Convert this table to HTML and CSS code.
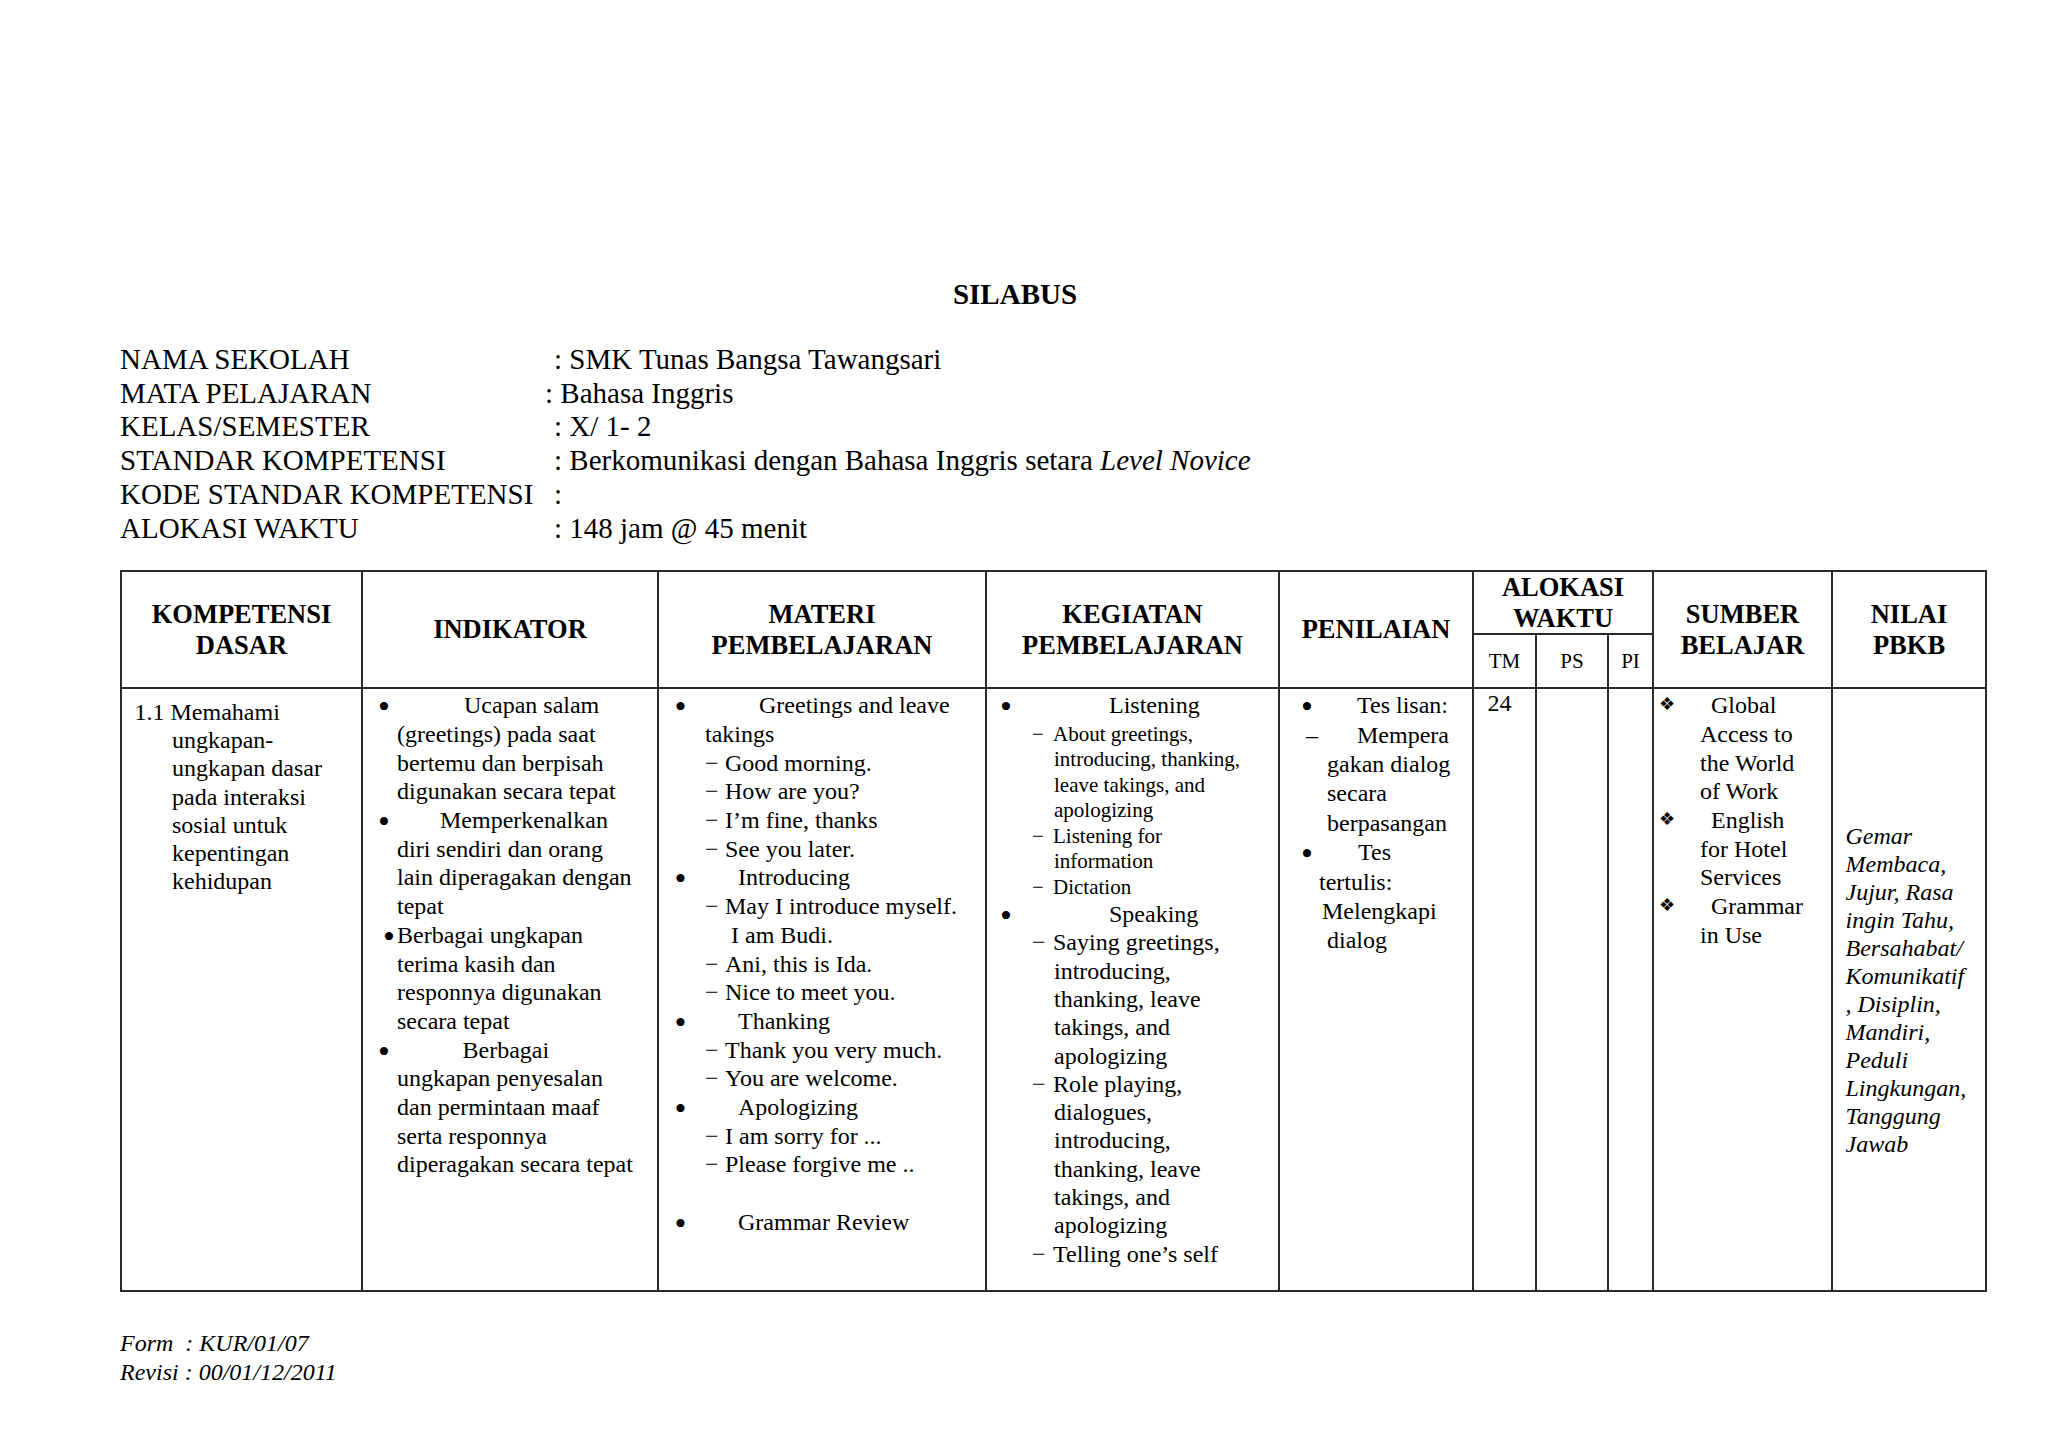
FILE: index.html
```html
<!DOCTYPE html>
<html lang="id">
<head>
<meta charset="utf-8">
<title>Silabus</title>
<link rel="stylesheet" href="styles.css">
</head>
<body>
<div class="page">
  <h1 class="title">SILABUS</h1>

  <div class="meta">
    <div class="label">NAMA SEKOLAH</div><div class="value">: SMK Tunas Bangsa Tawangsari</div>
    <div class="label">MATA PELAJARAN</div><div class="value shift">: Bahasa Inggris</div>
    <div class="label">KELAS/SEMESTER</div><div class="value">: X/ 1- 2</div>
    <div class="label">STANDAR KOMPETENSI</div><div class="value">: Berkomunikasi dengan Bahasa Inggris setara <i>Level Novice</i></div>
    <div class="label">KODE STANDAR KOMPETENSI</div><div class="value">:</div>
    <div class="label">ALOKASI WAKTU</div><div class="value">: 148 jam @ 45 menit</div>
  </div>

  <table class="syl">
    <colgroup>
      <col class="c1"><col class="c2"><col class="c3"><col class="c4"><col class="c5">
      <col class="c6"><col class="c7"><col class="c8"><col class="c9"><col class="c10">
    </colgroup>
    <thead>
      <tr class="h1">
        <th rowspan="2">KOMPETENSI<br>DASAR</th>
        <th rowspan="2">INDIKATOR</th>
        <th rowspan="2">MATERI<br>PEMBELAJARAN</th>
        <th rowspan="2">KEGIATAN<br>PEMBELAJARAN</th>
        <th rowspan="2">PENILAIAN</th>
        <th colspan="3">ALOKASI<br>WAKTU</th>
        <th rowspan="2">SUMBER<br>BELAJAR</th>
        <th rowspan="2">NILAI<br>PBKB</th>
      </tr>
      <tr class="h2">
        <th class="sm">TM</th>
        <th class="sm">PS</th>
        <th class="sm">PI</th>
      </tr>
    </thead>
    <tbody>
      <tr class="body">
        <td class="kd"><p>1.1 Memahami<br>ungkapan-<br>ungkapan dasar<br>pada interaksi<br>sosial untuk<br>kepentingan<br>kehidupan</p></td>

        <td class="ind">
          <p><span class="bl dot w84">•</span>Ucapan salam<br>(greetings) pada saat<br>bertemu dan berpisah<br>digunakan secara tepat</p>
          <p><span class="bl dot w60">•</span>Memperkenalkan<br>diri sendiri dan orang<br>lain diperagakan dengan<br>tepat</p>
          <p class="near"><span class="bl dot w12">•</span>Berbagai ungkapan<br>terima kasih dan<br>responnya digunakan<br>secara tepat</p>
          <p><span class="bl dot w82">•</span>Berbagai<br>ungkapan penyesalan<br>dan permintaan maaf<br>serta responnya<br>diperagakan secara tepat</p>
        </td>

        <td class="mat">
          <p class="it"><span class="bl dot w82">•</span>Greetings and leave<br>takings</p>
          <p class="sub"><span class="ds">−</span>Good morning.</p>
          <p class="sub"><span class="ds">−</span>How are you?</p>
          <p class="sub"><span class="ds">−</span>I’m fine, thanks</p>
          <p class="sub"><span class="ds">−</span>See you later.</p>
          <p class="it"><span class="bl dot w61">•</span>Introducing</p>
          <p class="sub"><span class="ds">−</span>May I introduce myself.<br>&nbsp;I am Budi.</p>
          <p class="sub"><span class="ds">−</span>Ani, this is Ida.</p>
          <p class="sub"><span class="ds">−</span>Nice to meet you.</p>
          <p class="it"><span class="bl dot w61">•</span>Thanking</p>
          <p class="sub"><span class="ds">−</span>Thank you very much.</p>
          <p class="sub"><span class="ds">−</span>You are welcome.</p>
          <p class="it"><span class="bl dot w61">•</span>Apologizing</p>
          <p class="sub"><span class="ds">−</span>I am sorry for ...</p>
          <p class="sub"><span class="ds">−</span>Please forgive me ..</p>
          <p class="gap"></p>
          <p class="it"><span class="bl dot w61">•</span>Grammar Review</p>
        </td>

        <td class="keg">
          <p class="it"><span class="bl dot w107">•</span>Listening</p>
          <div class="small">
            <p class="sub"><span class="ds">−</span>About greetings,<br>introducing, thanking,<br>leave takings, and<br>apologizing</p>
            <p class="sub"><span class="ds">−</span>Listening for<br>information</p>
            <p class="sub"><span class="ds">−</span>Dictation</p>
          </div>
          <p class="it"><span class="bl dot w107">•</span>Speaking</p>
          <p class="sub"><span class="ds">−</span>Saying greetings,<br>introducing,<br>thanking, leave<br>takings, and<br>apologizing</p>
          <p class="sub"><span class="ds">−</span>Role playing,<br>dialogues,<br>introducing,<br>thanking, leave<br>takings, and<br>apologizing</p>
          <p class="sub"><span class="ds">−</span>Telling one’s self</p>
        </td>

        <td class="pen">
          <div class="ln l23"><span class="bl dot w54">•</span>Tes lisan:</div>
          <div class="ln l26"><span class="bl w51">–</span>Mempera</div>
          <div class="ln l47">gakan dialog</div>
          <div class="ln l47">secara</div>
          <div class="ln l47">berpasangan</div>
          <div class="ln l23"><span class="bl dot w55">•</span>Tes</div>
          <div class="ln l39">tertulis:</div>
          <div class="ln l42">Melengkapi</div>
          <div class="ln l47">dialog</div>
        </td>

        <td class="tm">24</td>
        <td></td>
        <td></td>

        <td class="src">
          <p><span class="dm">❖</span>Global<br>Access to<br>the World<br>of Work</p>
          <p><span class="dm">❖</span>English<br>for Hotel<br>Services</p>
          <p><span class="dm">❖</span>Grammar<br>in Use</p>
        </td>

        <td class="nil">Gemar<br>Membaca,<br>Jujur, Rasa<br>ingin Tahu,<br>Bersahabat/<br>Komunikatif<br>, Disiplin,<br>Mandiri,<br>Peduli<br>Lingkungan,<br>Tanggung<br>Jawab</td>
      </tr>
    </tbody>
  </table>

  <div class="foot">
    <div>Form &nbsp;: KUR/01/07</div>
    <div>Revisi : 00/01/12/2011</div>
  </div>
</div>
</body>
</html>
```

FILE: styles.css
```css
html, body {
  margin: 0;
  padding: 0;
  background: #ffffff;
}

body {
  font-family: "Liberation Serif", "Times New Roman", serif;
  color: #000000;
}

.page {
  padding: 277px 0 40px 120px;
  width: 1867px;
}

.title {
  margin: 0;
  width: 1790px;
  text-align: center;
  font-size: 29px;
  line-height: 34px;
  font-weight: bold;
}

.meta {
  margin-top: 32px;
  display: grid;
  grid-template-columns: 434px auto;
  font-size: 29px;
  line-height: 33.7px;
}

.meta .label,
.meta .value {
  white-space: nowrap;
}

.meta .shift {
  margin-left: -9px;
}

/* ---------- table ---------- */
.syl {
  margin-top: 25px;
  border-collapse: collapse;
  table-layout: fixed;
  width: 1867px;
}

.syl th,
.syl td {
  border: 2px solid #2a2a2a;
  padding: 0;
}

.c1 { width: 241px; }
.c2 { width: 296px; }
.c3 { width: 328px; }
.c4 { width: 293px; }
.c5 { width: 194px; }
.c6 { width: 63px; }
.c7 { width: 72px; }
.c8 { width: 45px; }
.c9 { width: 179px; }
.c10 { width: 154px; }

.syl th {
  font-size: 26.5px;
  line-height: 30.5px;
  font-weight: bold;
  text-align: center;
  vertical-align: middle;
}

.syl tr.h1 th { height: 60px; }
.syl tr.h2 th { height: 52px; }

.syl th.sm {
  font-size: 21px;
  font-weight: normal;
  line-height: 24px;
}

.syl tr.body td {
  height: 599px;
  vertical-align: top;
  font-size: 24px;
  line-height: 28.7px;
}

.syl p {
  margin: 0;
}

.bl,
.ds,
.dm {
  display: inline-block;
  text-indent: 0;
}

.bl.dot {
  font-size: 34px;
  line-height: 0;
  vertical-align: -5px;
  margin-left: -2px;
  padding-right: 2px;
}

.w12 { width: 12px; }
.w51 { width: 51px; }
.w54 { width: 54px; }
.w55 { width: 55px; }
.w60 { width: 60px; }
.w61 { width: 61.5px; }
.w82 { width: 82.5px; }
.w84 { width: 84px; }
.w107 { width: 107px; }

/* kompetensi dasar */
.kd p {
  padding: 9px 0 0 50px;
  text-indent: -37.5px;
  line-height: 28.1px;
}

/* indikator */
.ind {
  padding-top: 2px !important;
}
.ind p {
  padding-left: 34px;
  text-indent: -17px;
}
.ind p.near {
  text-indent: -12px;
}

/* materi */
.mat {
  padding-top: 2px !important;
}
.mat .it {
  padding-left: 46px;
  text-indent: -28.5px;
}
.mat .sub {
  padding-left: 66px;
  text-indent: -20px;
}
.mat .ds { width: 20px; }
.mat .gap { height: 28.7px; }

/* kegiatan */
.keg {
  padding-top: 2px !important;
  line-height: 28.3px !important;
}
.keg .it {
  padding-left: 15px;
}
.keg .sub {
  padding-left: 67px;
  text-indent: -22px;
}
.keg .ds { width: 21px; }
.keg .small {
  margin-top: 2px;
  font-size: 21px;
  line-height: 25.5px;
}

/* penilaian */
.pen {
  padding-top: 2px !important;
  line-height: 29.4px !important;
}
.pen .ln { white-space: nowrap; }
.l23 { padding-left: 23px; }
.l26 { padding-left: 26px; }
.l39 { padding-left: 39px; }
.l42 { padding-left: 42px; }
.l47 { padding-left: 47px; }

/* alokasi */
.tm {
  padding-left: 13.5px !important;
}

/* sumber */
.src {
  padding-top: 2px !important;
}
.src p {
  padding-left: 46px;
  text-indent: -41px;
}
.src .dm {
  width: 52px;
  font-family: "DejaVu Sans", sans-serif;
  font-size: 18px;
  line-height: 0;
  vertical-align: 3px;
}

/* nilai */
.syl tr.body td.nil {
  vertical-align: middle;
  font-style: italic;
  line-height: 28px;
  padding-left: 12.5px;
}

/* footer */
.foot {
  margin-top: 37px;
  font-style: italic;
  font-size: 24px;
  line-height: 28.7px;
}
```
